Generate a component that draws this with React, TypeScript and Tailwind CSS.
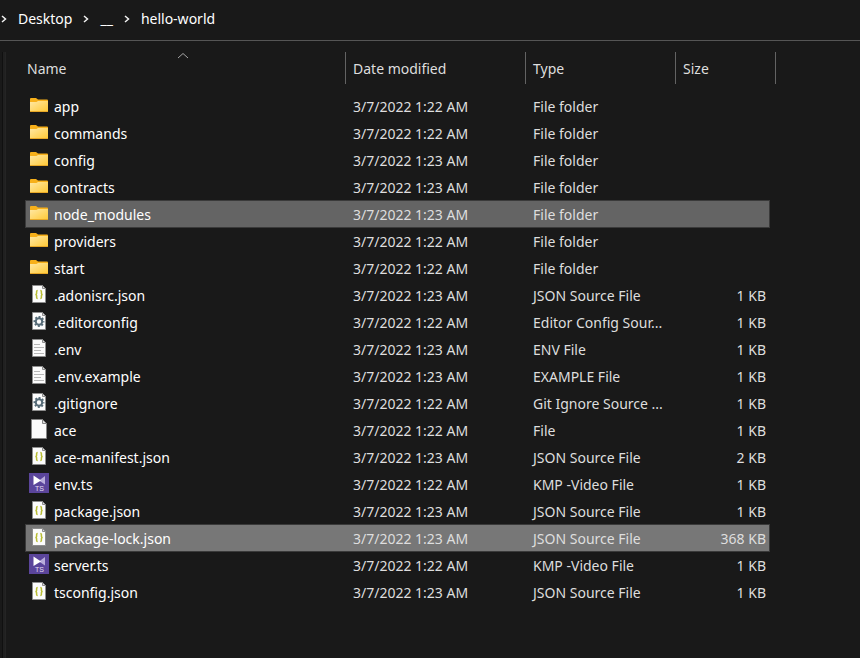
import React from "react";

type IconKind = "folder" | "json" | "gear" | "text" | "blank" | "ts";

interface Entry {
  name: string;
  modified: string;
  type: string;
  size?: string;
  icon: IconKind;
  state?: "hover" | "selected";
}

const EARLY = "3/7/2022 1:22 AM";
const LATE = "3/7/2022 1:23 AM";

const entries: Entry[] = [
  { name: "app", modified: EARLY, type: "File folder", icon: "folder" },
  { name: "commands", modified: EARLY, type: "File folder", icon: "folder" },
  { name: "config", modified: LATE, type: "File folder", icon: "folder" },
  { name: "contracts", modified: LATE, type: "File folder", icon: "folder" },
  { name: "node_modules", modified: LATE, type: "File folder", icon: "folder", state: "hover" },
  { name: "providers", modified: EARLY, type: "File folder", icon: "folder" },
  { name: "start", modified: EARLY, type: "File folder", icon: "folder" },
  { name: ".adonisrc.json", modified: LATE, type: "JSON Source File", size: "1 KB", icon: "json" },
  { name: ".editorconfig", modified: EARLY, type: "Editor Config Sour...", size: "1 KB", icon: "gear" },
  { name: ".env", modified: LATE, type: "ENV File", size: "1 KB", icon: "text" },
  { name: ".env.example", modified: LATE, type: "EXAMPLE File", size: "1 KB", icon: "text" },
  { name: ".gitignore", modified: EARLY, type: "Git Ignore Source ...", size: "1 KB", icon: "gear" },
  { name: "ace", modified: EARLY, type: "File", size: "1 KB", icon: "blank" },
  { name: "ace-manifest.json", modified: LATE, type: "JSON Source File", size: "2 KB", icon: "json" },
  { name: "env.ts", modified: EARLY, type: "KMP -Video File", size: "1 KB", icon: "ts" },
  { name: "package.json", modified: LATE, type: "JSON Source File", size: "1 KB", icon: "json" },
  { name: "package-lock.json", modified: LATE, type: "JSON Source File", size: "368 KB", icon: "json", state: "selected" },
  { name: "server.ts", modified: EARLY, type: "KMP -Video File", size: "1 KB", icon: "ts" },
  { name: "tsconfig.json", modified: LATE, type: "JSON Source File", size: "1 KB", icon: "json" },
];

const EDGE =
  "[&>td]:shadow-[inset_0_1px_0_#3a3a3a,0_1px_0_#3a3a3a] [&>td:first-child]:shadow-[inset_1px_1px_0_#3a3a3a,0_1px_0_#3a3a3a] [&>td:last-child]:shadow-[inset_-1px_1px_0_#3a3a3a,0_1px_0_#3a3a3a]";

const rowStyles = {
  none: "",
  hover: `bg-[#646464] ${EDGE}`,
  selected: `bg-[#777777] ${EDGE}`,
};

function FileIcon({ kind }: { kind: IconKind }) {
  return (
    <svg className="block size-5 shrink-0" viewBox="0 0 20 20" aria-hidden="true">
      {kind === "folder" && (
        <>
          <defs>
            <linearGradient id="folderFace" x1="0" y1="0" x2="1" y2="1">
              <stop offset="0" stopColor="#ffe8a4" />
              <stop offset="1" stopColor="#ffc936" />
            </linearGradient>
          </defs>
          <path d="M1 4Q1 3 2 3H7L9 4.500H18Q19 4.500 19 5.500V9H1Z" fill="#f7b01a" />
          <path d="M1 7H7.500L9 6H19V16.500H1Z" fill="url(#folderFace)" />
          <path d="M1 16H19V16.500Q19 17 18.500 17H1.500Q1 17 1 16.500Z" fill="#e8a827" />
        </>
      )}
      {(kind === "json" || kind === "gear" || kind === "text") && (
        <>
          <path d="M3.500 1.500H13.500L16.500 4.500V18.500H3.500Z" fill="#fcfcfc" stroke="#8d8d8d" />
          <path d="M13.500 1.500V4.500H16.500Z" fill="#dddddd" stroke="#8d8d8d" />
        </>
      )}
      {kind === "json" && (
        <path
          d="M8.700 6.500Q7.600 6.500 7.600 7.500V9.500Q7.600 10.500 6.300 10.500Q7.600 10.500 7.600 11.500V13.500Q7.600 14.500 8.700 14.500M11.300 6.500Q12.400 6.500 12.400 7.500V9.500Q12.400 10.500 13.700 10.500Q12.400 10.500 12.400 11.500V13.500Q12.400 14.500 11.300 14.500"
          fill="none"
          stroke="#b9bd35"
          strokeWidth="1.500"
        />
      )}
      {kind === "gear" && (
        <>
          <circle cx="10" cy="10.500" r="4.500" fill="none" stroke="#566b77" strokeWidth="2" strokeDasharray="1.900 1.634" strokeDashoffset="0.950" />
          <circle cx="10" cy="10.500" r="3.200" fill="none" stroke="#566b77" strokeWidth="2" />
        </>
      )}
      {kind === "text" && (
        <path d="M5 6.500H11M5 9.500H15M5 12.500H12M5 15.500H15" stroke="#b8b8b8" fill="none" />
      )}
      {kind === "blank" && (
        <>
          <path d="M2.500 0.500H13.500L17.500 4.500V19.500H2.500Z" fill="#fafafa" stroke="#858585" />
          <path d="M13.500 0.500V4.500H17.500Z" fill="#dedede" stroke="#858585" />
        </>
      )}
      {kind === "ts" && (
        <>
          <rect width="20" height="20" fill="#5b459b" />
          <path d="M16 3V11.500L10 7.500Z" fill="#b9addb" />
          <path d="M4.500 2.500L12 7.500L4.500 12Z" fill="#ffffff" />
          <text x="10.500" y="18" textAnchor="middle" fontSize="7" fontFamily="Liberation Sans, sans-serif" fill="#e4def2">
            TS
          </text>
        </>
      )}
    </svg>
  );
}

function Chevron() {
  return (
    <svg className="h-2 w-1.5 shrink-0" viewBox="0 0 6 8" aria-hidden="true">
      <path d="M1 1L4.500 4L1 7" fill="none" stroke="#f2f2f2" strokeWidth="1.500" />
    </svg>
  );
}

function Breadcrumbs() {
  return (
    <nav aria-label="Address" className="flex h-[41px] items-center gap-[11px] border-b border-[#555555] px-px pb-0.5 text-white">
      <Chevron />
      <button type="button">Desktop</button>
      <Chevron />
      <button type="button">__</button>
      <Chevron />
      <button type="button">hello-world</button>
    </nav>
  );
}

function ColumnHeader({ label, first, last }: { label: string; first?: boolean; last?: boolean }) {
  const edge = first ? "pl-0.5" : last ? "border-x border-[#636363] pl-[7px]" : "border-l border-[#636363] pl-[7px]";
  return (
    <th scope="col" colSpan={last ? 2 : 1} aria-sort={first ? "ascending" : undefined} className="p-0 pb-2 text-left font-normal">
      <button type="button" className={`relative flex h-8 w-full items-center pt-0.5 text-[#dedede] ${edge}`}>
        {label}
        {first && (
          <svg className="absolute top-0 left-1/2 h-[7px] w-3 -translate-x-2" viewBox="0 0 12 7" aria-hidden="true">
            <path d="M1 6L6 1.500L11 6" fill="none" stroke="#a5a5a5" />
          </svg>
        )}
      </button>
    </th>
  );
}

function FileRow({ entry }: { entry: Entry }) {
  return (
    <tr className={`leading-6 whitespace-nowrap text-[#dedede] ${rowStyles[entry.state ?? "none"]}`}>
      <td className="p-0 pt-[3px] pl-1">
        <div className="flex items-start gap-[5px]">
          <FileIcon kind={entry.icon} />
          <span className="text-white">{entry.name}</span>
        </div>
      </td>
      <td className="p-0 pt-[3px] pl-2">{entry.modified}</td>
      <td className="p-0 pt-[3px] pl-2">{entry.type}</td>
      <td className="p-0 pt-[3px] pr-1 text-right">{entry.size}</td>
    </tr>
  );
}

export default function App() {
  return (
    <div className="flex min-h-screen flex-col bg-[#191919] font-['Noto_Sans','Open_Sans',sans-serif] text-sm leading-5">
      <Breadcrumbs />
      <main className="flex grow pt-[11px]">
        <div className="ml-0.5 w-1 shrink-0 border-r border-l border-r-[#242424] border-l-[#101010] bg-[#202020]" />
        <div className="grow pl-[19px]">
          <table className="w-[751px] table-fixed border-separate border-spacing-0">
            <colgroup>
              <col className="w-80" />
              <col className="w-[180px]" />
              <col className="w-[150px]" />
              <col className="w-[95px]" />
              <col className="w-1.5" />
            </colgroup>
            <thead>
              <tr>
                <ColumnHeader label="Name" first />
                <ColumnHeader label="Date modified" />
                <ColumnHeader label="Type" />
                <ColumnHeader label="Size" last />
              </tr>
            </thead>
            <tbody>
              {entries.map((entry) => (
                <FileRow key={entry.name} entry={entry} />
              ))}
            </tbody>
          </table>
        </div>
      </main>
    </div>
  );
}
